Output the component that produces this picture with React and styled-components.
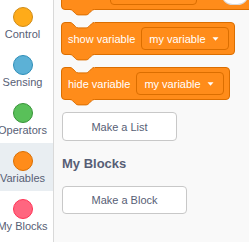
import React from "react";
import styled, { createGlobalStyle } from "styled-components";

const GlobalStyle = createGlobalStyle`
  html, body {
    margin: 0;
    padding: 0;
    overflow: hidden;
    background: #f9f9f9;
  }
  * {
    box-sizing: border-box;
  }
`;

const Layout = styled.div`
  width: 249px;
  height: 242px;
  display: flex;
  overflow: hidden;
  font-family: "Liberation Sans", Arial, sans-serif;
`;

const Sidebar = styled.div`
  flex: 0 0 62px;
  margin-left: -8px;
  background: #ffffff;
  border-right: 1px solid #d9d9d9;
  display: flex;
  flex-direction: column;
  margin-top: -1px;
`;

const Category = styled.div`
  height: 48px;
  display: flex;
  flex-direction: column;
  align-items: center;
  padding-top: 8px;
  background: ${(props) => (props.$selected ? "#e9eef2" : "transparent")};
`;

const Bubble = styled.div`
  width: 20px;
  height: 20px;
  border-radius: 50%;
  background: ${(props) => props.$fill};
  border: 1px solid ${(props) => props.$stroke};
`;

const CategoryLabel = styled.div`
  margin-top: 1px;
  font-size: 11px;
  line-height: 13px;
  color: #575e75;
  white-space: nowrap;
`;

const Flyout = styled.div`
  flex: 1;
  background: #f9f9f9;
  padding-left: 7px;
  margin-top: -23px;
  display: flex;
  flex-direction: column;
  align-items: flex-start;
`;

const Block = styled.div`
  position: relative;
  height: 33px;
  display: flex;
  align-items: center;
  gap: 6px;
  padding: 0 5px 0 6px;
  margin-bottom: 12px;
  background: #ff8c1a;
  border: 1px solid #db6e00;
  border-radius: 4px;
  color: #ffffff;
  font-size: 11px;
  white-space: nowrap;
  flex-shrink: 0;
`;

const Notch = styled.svg`
  position: absolute;
  left: 8px;
  top: -1px;
  width: 25px;
  height: 7px;
`;

const Tab = styled.svg`
  position: absolute;
  left: 8px;
  top: 100%;
  width: 25px;
  height: 7px;
`;

const Dropdown = styled.div`
  height: 23px;
  display: flex;
  align-items: center;
  gap: 6px;
  padding: 0 9px 0 7px;
  background: #ff8c1a;
  border: 1px solid #db6e00;
  border-radius: 4px;
  color: #ffffff;
`;

const NumberInput = styled.div`
  height: 23px;
  min-width: 27px;
  padding: 0 10px;
  display: flex;
  align-items: center;
  justify-content: center;
  background: #ffffff;
  border: 1px solid rgba(0, 0, 0, 0.15);
  border-radius: 12px;
  color: #575e75;
`;

const FlyoutButton = styled.div`
  width: ${(props) => props.$width}px;
  height: ${(props) => props.$height}px;
  margin-left: 1px;
  display: flex;
  align-items: center;
  justify-content: center;
  background: #ffffff;
  border: 1px solid #c8c8c8;
  border-radius: 4px;
  color: #575e75;
  font-size: 11px;
  flex-shrink: 0;
`;

const Heading = styled.div`
  margin: 15px 0 14px 1px;
  font-size: 13px;
  line-height: 16px;
  font-weight: bold;
  color: #575e75;
`;

const CURVE =
  "C1.3 0.5 2 1.2 2.7 1.8 L5.4 4.5 C6 5.2 6.8 5.9 8.1 5.9 H16.2 C17.5 5.9 18.2 5.2 18.9 4.5 L21.6 1.8 C22.3 1.2 23 0.5 24.3 0.5";

const categories = [
  { name: "Control", fill: "#ffab19", stroke: "#cf8b17" },
  { name: "Sensing", fill: "#5cb1d6", stroke: "#2e8eb8" },
  { name: "Operators", fill: "#59c059", stroke: "#389438" },
  { name: "Variables", fill: "#ff8c1a", stroke: "#db6e00", selected: true },
  { name: "My Blocks", fill: "#ff6680", stroke: "#ff3355" },
];

const Caret = () => (
  <svg width="7" height="4" viewBox="0 0 7 4">
    <path d="M0.5 0.3 H6.5 L3.5 3.7 Z" fill="#ffffff" />
  </svg>
);

const StackBlock = ({ children }) => (
  <Block>
    <Notch viewBox="0 0 25 7">
      <path d={`M0 0 L0 0.5 ${CURVE} L25 0.5 L25 0 Z`} fill="#f9f9f9" />
      <path d={`M0 0.5 ${CURVE}`} fill="none" stroke="#db6e00" strokeWidth="1" />
    </Notch>
    {children}
    <Tab viewBox="0 0 25 7">
      <path d={`M0 0 L0 0.5 ${CURVE} L25 0.5 L25 0 Z`} fill="#ff8c1a" />
      <path d={`M0 0.5 ${CURVE}`} fill="none" stroke="#db6e00" strokeWidth="1" />
    </Tab>
  </Block>
);

const VariableMenu = () => (
  <Dropdown>
    my variable
    <Caret />
  </Dropdown>
);

export default function App() {
  return (
    <Layout>
      <GlobalStyle />
      <Sidebar>
        {categories.map((c) => (
          <Category key={c.name} $selected={c.selected}>
            <Bubble $fill={c.fill} $stroke={c.stroke} />
            <CategoryLabel>{c.name}</CategoryLabel>
          </Category>
        ))}
      </Sidebar>
      <Flyout>
        <StackBlock>
          <span>change</span>
          <VariableMenu />
          <span>by</span>
          <NumberInput>1</NumberInput>
        </StackBlock>
        <StackBlock>
          <span>show variable</span>
          <VariableMenu />
        </StackBlock>
        <StackBlock>
          <span>hide variable</span>
          <VariableMenu />
        </StackBlock>
        <FlyoutButton $width={115} $height={29}>
          Make a List
        </FlyoutButton>
        <Heading>My Blocks</Heading>
        <FlyoutButton $width={125} $height={28}>
          Make a Block
        </FlyoutButton>
      </Flyout>
    </Layout>
  );
}
